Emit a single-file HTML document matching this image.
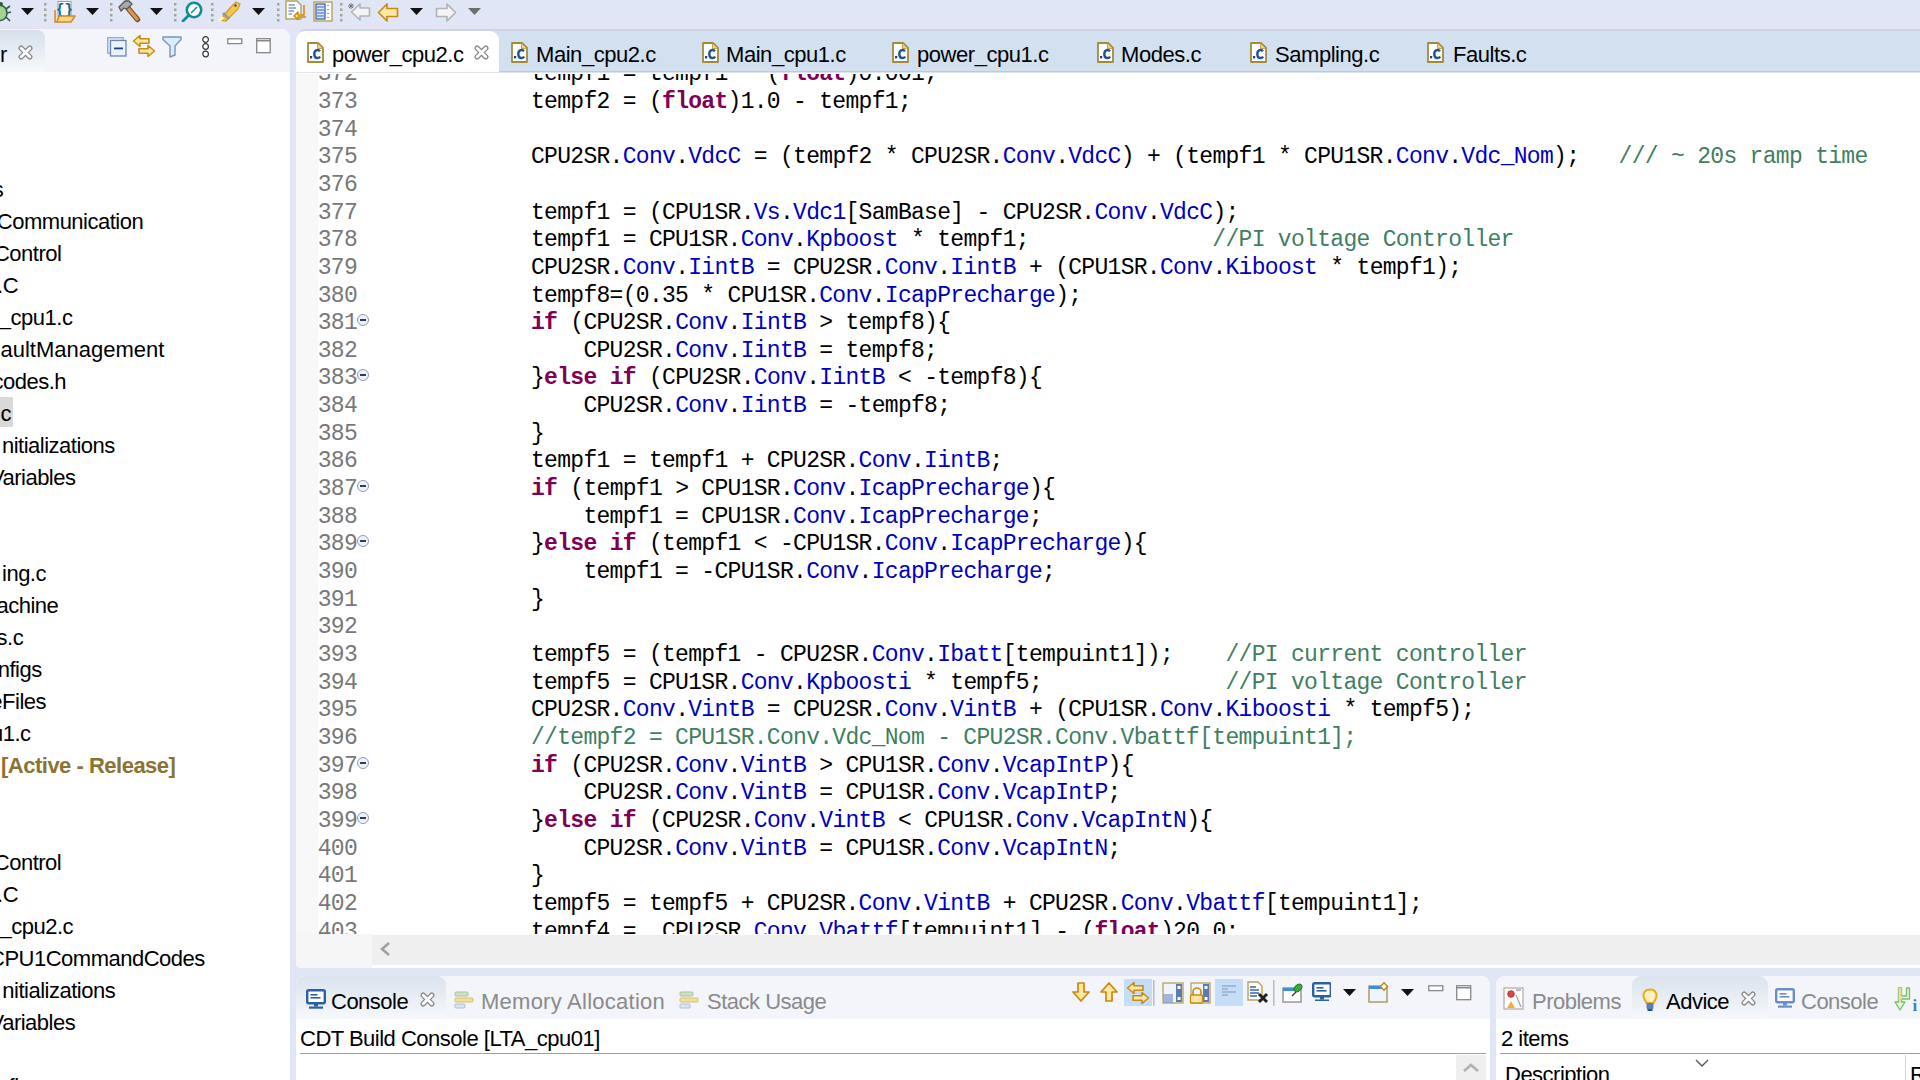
<!DOCTYPE html>
<html><head><meta charset="utf-8">
<style>
*{box-sizing:border-box}
html,body{margin:0;padding:0}
body{width:1920px;height:1080px;overflow:hidden;position:relative;background:#e0e6f5;font-family:"Liberation Sans",sans-serif;}
.abs{position:absolute}
/* left panel */
#lp{position:absolute;left:0;top:29px;width:290px;height:1051px;background:#fff;border-top-right-radius:9px;overflow:hidden}
#lph{position:absolute;left:0;top:0;width:290px;height:43px;background:#f3f5fa}
#lptab{position:absolute;left:0;top:1px;width:45px;height:42px;background:linear-gradient(#d6e0eb,#f7f9fc);border-top-right-radius:8px}
.ti{position:absolute;height:24px;font-size:22px;letter-spacing:-0.5px;white-space:pre;color:#000;line-height:24px}
.ti.act{color:#8b7331;font-weight:bold;left:2px}
/* editor */
#ed{position:absolute;left:296px;top:29px;width:1624px;height:939px;background:#fff;border-top-left-radius:9px;border-bottom-left-radius:5px;overflow:hidden}
#edtabs{position:absolute;left:0;top:0;width:1624px;height:43px;background:#d2e0f0;border-top:2px solid #c9d5e4}
#acttab{position:absolute;left:0;top:0;width:203px;height:43px;background:#fff;border-top-left-radius:9px;border-top-right-radius:9px}
.tab{position:absolute;top:11px;font-size:22px;letter-spacing:-0.45px;white-space:pre;line-height:26px;color:#000}
.cicon{position:absolute;top:13px;width:17px;height:21px}
#code{position:absolute;left:0;top:45px;width:1624px;height:860px;overflow:hidden;background:#fff}
#gut1{position:absolute;left:0;top:0;width:22px;height:100%;background:#f8f8f8}
.ln{position:absolute;left:0;width:61px;text-align:right;font-family:"Liberation Mono",monospace;font-size:23px;letter-spacing:-0.7px;line-height:28px;color:#787878;white-space:pre}
.cl{position:absolute;left:235px;font-family:"Liberation Mono",monospace;font-size:23px;letter-spacing:-0.7px;line-height:28px;color:#000;white-space:pre}
.cl b.k{font-weight:bold;color:#7f0055}
.cl i.f{font-style:normal;color:#0000c0}
.cl u.c{text-decoration:none;color:#3f7f5f}
.fold{position:absolute;left:61px;width:12px;height:12px;border-radius:50%;border:1px solid #8e9cb6;background:#eef2f8}
.fold::after{content:"";position:absolute;left:2px;top:4px;width:6px;height:2px;background:#2b3d63}
#hsb{position:absolute;left:76px;top:906px;width:1548px;height:30px;background:#efefef}
/* bottom panels */
#bp{position:absolute;left:296px;top:976px;width:1194px;height:104px;background:#fff;border-top-left-radius:9px;border-top-right-radius:9px;overflow:hidden}
#bph{position:absolute;left:0;top:0;width:100%;height:43px;background:#f3f5fa}
#bptab{position:absolute;left:0;top:0;width:150px;height:43px;background:linear-gradient(#dbe3ee,#f6f8fb);border-top-left-radius:9px;border-top-right-radius:9px}
#rp{position:absolute;left:1496px;top:976px;width:424px;height:104px;background:#fff;border-top-left-radius:9px;overflow:hidden}
#rph{position:absolute;left:0;top:0;width:100%;height:43px;background:#f3f5fa}
#rptab{position:absolute;left:136px;top:0;width:136px;height:43px;background:linear-gradient(#dbe3ee,#f6f8fb);border-top-left-radius:9px;border-top-right-radius:9px}
.ptab{position:absolute;top:12px;font-size:22px;letter-spacing:-0.5px;white-space:pre;line-height:26px}
.gray{color:#8a8a8a}
</style></head><body>

<!-- toolbar -->
<div id="tb" class="abs" style="left:0;top:0;width:1920px;height:29px"></div><div class="abs" style="left:0;top:26px;width:1920px;height:3px;background:#e5e3f3"></div>

<!-- left panel -->
<div id="lp">
  <div id="lph"><div id="lptab"></div><div class="ptab" style="left:0px;top:12.5px">r</div></div>
  <div class="abs" style="left:0;top:368.0px;width:13px;height:30px;background:#d9d9d9"></div>
<div class="ti" style="top:148.5px;right:286.7px">includes</div>
<div class="ti" style="top:180.6px;right:146.8px">IPCCommunication</div>
<div class="ti" style="top:212.6px;right:228.6px">PowerControl</div>
<div class="ti" style="top:244.6px;right:271.9px">F2837xD_Ipc.C</div>
<div class="ti" style="top:276.7px;right:217.6px">power_cpu1.c</div>
<div class="ti" style="top:308.8px;right:125.6px ;letter-spacing:0px">aultManagement</div>
<div class="ti" style="top:340.8px;right:223.9px">codes.h</div>
<div class="ti" style="top:372.8px;right:279.0px">Sampling.c</div>
<div class="ti" style="top:404.9px;right:175.2px">nitializations</div>
<div class="ti" style="top:436.9px;right:214.5px">Variables</div>
<div class="ti" style="top:533.1px;right:244.0px">ing.c</div>
<div class="ti" style="top:565.1px;right:231.7px">StateMachine</div>
<div class="ti" style="top:597.2px;right:266.8px">Modes.c</div>
<div class="ti" style="top:629.2px;right:248.3px">targetConfigs</div>
<div class="ti" style="top:661.3px;right:244.0px">SourceFiles</div>
<div class="ti" style="top:693.3px;right:259.4px">Main_cpu1.c</div>
<div class="ti" style="top:821.5px;right:228.8px">PowerControl</div>
<div class="ti" style="top:853.6px;right:271.9px">F2837xD_Ipc.C</div>
<div class="ti" style="top:885.6px;right:217.0px">power_cpu2.c</div>
<div class="ti" style="top:917.7px;right:85.2px">IPC_CPU1CommandCodes</div>
<div class="ti" style="top:949.7px;right:174.8px">nitializations</div>
<div class="ti" style="top:981.8px;right:214.8px">Variables</div>
<div class="ti" style="top:1045.9px;right:249.2px">targetConfigs</div>
<div class="ti act" style="top:725.4px;left:1px">[Active - Release]</div>
</div>

<!-- editor -->
<div id="ed">
  <div id="edtabs">
    <div class="abs" style="left:0;top:40px;width:1624px;height:1.5px;background:#bccadb"></div><div id="acttab"></div>
    <div class="tab" style="left:36px">power_cpu2.c</div>
    <div class="tab" style="left:240px">Main_cpu2.c</div>
    <div class="tab" style="left:430px">Main_cpu1.c</div>
    <div class="tab" style="left:621px">power_cpu1.c</div>
    <div class="tab" style="left:825px">Modes.c</div>
    <div class="tab" style="left:979px">Sampling.c</div>
    <div class="tab" style="left:1157px">Faults.c</div>
  </div>
  <div class="abs" style="left:0;top:43px;width:1624px;height:1px;background:#dfe4ec"></div>
  <div id="code">
    <div id="gut1"></div>
    <div class="ln" style="top:-13.78px">372</div>
<div class="cl" style="top:-13.78px">tempf1 = tempf1   (<b class="k">float</b>)0.001;</div>
<div class="ln" style="top:13.88px">373</div>
<div class="cl" style="top:13.88px">tempf2 = (<b class="k">float</b>)1.0 - tempf1;</div>
<div class="ln" style="top:41.54px">374</div>
<div class="ln" style="top:69.20px">375</div>
<div class="cl" style="top:69.20px">CPU2SR.<i class="f">Conv</i>.<i class="f">VdcC</i> = (tempf2 * CPU2SR.<i class="f">Conv</i>.<i class="f">VdcC</i>) + (tempf1 * CPU1SR.<i class="f">Conv</i>.<i class="f">Vdc_Nom</i>);   <u class="c">/// ~ 20s ramp time</u></div>
<div class="ln" style="top:96.86px">376</div>
<div class="ln" style="top:124.52px">377</div>
<div class="cl" style="top:124.52px">tempf1 = (CPU1SR.<i class="f">Vs</i>.<i class="f">Vdc1</i>[SamBase] - CPU2SR.<i class="f">Conv</i>.<i class="f">VdcC</i>);</div>
<div class="ln" style="top:152.18px">378</div>
<div class="cl" style="top:152.18px">tempf1 = CPU1SR.<i class="f">Conv</i>.<i class="f">Kpboost</i> * tempf1;              <u class="c">//PI voltage Controller</u></div>
<div class="ln" style="top:179.84px">379</div>
<div class="cl" style="top:179.84px">CPU2SR.<i class="f">Conv</i>.<i class="f">IintB</i> = CPU2SR.<i class="f">Conv</i>.<i class="f">IintB</i> + (CPU1SR.<i class="f">Conv</i>.<i class="f">Kiboost</i> * tempf1);</div>
<div class="ln" style="top:207.50px">380</div>
<div class="cl" style="top:207.50px">tempf8=(0.35 * CPU1SR.<i class="f">Conv</i>.<i class="f">IcapPrecharge</i>);</div>
<div class="ln" style="top:235.16px">381</div>
<div class="fold" style="top:239.98px"></div>
<div class="cl" style="top:235.16px"><b class="k">if</b> (CPU2SR.<i class="f">Conv</i>.<i class="f">IintB</i> &gt; tempf8){</div>
<div class="ln" style="top:262.82px">382</div>
<div class="cl" style="top:262.82px">    CPU2SR.<i class="f">Conv</i>.<i class="f">IintB</i> = tempf8;</div>
<div class="ln" style="top:290.48px">383</div>
<div class="fold" style="top:295.30px"></div>
<div class="cl" style="top:290.48px">}<b class="k">else</b> <b class="k">if</b> (CPU2SR.<i class="f">Conv</i>.<i class="f">IintB</i> &lt; -tempf8){</div>
<div class="ln" style="top:318.14px">384</div>
<div class="cl" style="top:318.14px">    CPU2SR.<i class="f">Conv</i>.<i class="f">IintB</i> = -tempf8;</div>
<div class="ln" style="top:345.80px">385</div>
<div class="cl" style="top:345.80px">}</div>
<div class="ln" style="top:373.46px">386</div>
<div class="cl" style="top:373.46px">tempf1 = tempf1 + CPU2SR.<i class="f">Conv</i>.<i class="f">IintB</i>;</div>
<div class="ln" style="top:401.12px">387</div>
<div class="fold" style="top:405.94px"></div>
<div class="cl" style="top:401.12px"><b class="k">if</b> (tempf1 &gt; CPU1SR.<i class="f">Conv</i>.<i class="f">IcapPrecharge</i>){</div>
<div class="ln" style="top:428.78px">388</div>
<div class="cl" style="top:428.78px">    tempf1 = CPU1SR.<i class="f">Conv</i>.<i class="f">IcapPrecharge</i>;</div>
<div class="ln" style="top:456.44px">389</div>
<div class="fold" style="top:461.26px"></div>
<div class="cl" style="top:456.44px">}<b class="k">else</b> <b class="k">if</b> (tempf1 &lt; -CPU1SR.<i class="f">Conv</i>.<i class="f">IcapPrecharge</i>){</div>
<div class="ln" style="top:484.10px">390</div>
<div class="cl" style="top:484.10px">    tempf1 = -CPU1SR.<i class="f">Conv</i>.<i class="f">IcapPrecharge</i>;</div>
<div class="ln" style="top:511.76px">391</div>
<div class="cl" style="top:511.76px">}</div>
<div class="ln" style="top:539.42px">392</div>
<div class="ln" style="top:567.08px">393</div>
<div class="cl" style="top:567.08px">tempf5 = (tempf1 - CPU2SR.<i class="f">Conv</i>.<i class="f">Ibatt</i>[tempuint1]);    <u class="c">//PI current controller</u></div>
<div class="ln" style="top:594.74px">394</div>
<div class="cl" style="top:594.74px">tempf5 = CPU1SR.<i class="f">Conv</i>.<i class="f">Kpboosti</i> * tempf5;              <u class="c">//PI voltage Controller</u></div>
<div class="ln" style="top:622.40px">395</div>
<div class="cl" style="top:622.40px">CPU2SR.<i class="f">Conv</i>.<i class="f">VintB</i> = CPU2SR.<i class="f">Conv</i>.<i class="f">VintB</i> + (CPU1SR.<i class="f">Conv</i>.<i class="f">Kiboosti</i> * tempf5);</div>
<div class="ln" style="top:650.06px">396</div>
<div class="cl" style="top:650.06px"><u class="c">//tempf2 = CPU1SR.Conv.Vdc_Nom - CPU2SR.Conv.Vbattf[tempuint1];</u></div>
<div class="ln" style="top:677.72px">397</div>
<div class="fold" style="top:682.54px"></div>
<div class="cl" style="top:677.72px"><b class="k">if</b> (CPU2SR.<i class="f">Conv</i>.<i class="f">VintB</i> &gt; CPU1SR.<i class="f">Conv</i>.<i class="f">VcapIntP</i>){</div>
<div class="ln" style="top:705.38px">398</div>
<div class="cl" style="top:705.38px">    CPU2SR.<i class="f">Conv</i>.<i class="f">VintB</i> = CPU1SR.<i class="f">Conv</i>.<i class="f">VcapIntP</i>;</div>
<div class="ln" style="top:733.04px">399</div>
<div class="fold" style="top:737.86px"></div>
<div class="cl" style="top:733.04px">}<b class="k">else</b> <b class="k">if</b> (CPU2SR.<i class="f">Conv</i>.<i class="f">VintB</i> &lt; CPU1SR.<i class="f">Conv</i>.<i class="f">VcapIntN</i>){</div>
<div class="ln" style="top:760.70px">400</div>
<div class="cl" style="top:760.70px">    CPU2SR.<i class="f">Conv</i>.<i class="f">VintB</i> = CPU1SR.<i class="f">Conv</i>.<i class="f">VcapIntN</i>;</div>
<div class="ln" style="top:788.36px">401</div>
<div class="cl" style="top:788.36px">}</div>
<div class="ln" style="top:816.02px">402</div>
<div class="cl" style="top:816.02px">tempf5 = tempf5 + CPU2SR.<i class="f">Conv</i>.<i class="f">VintB</i> + CPU2SR.<i class="f">Conv</i>.<i class="f">Vbattf</i>[tempuint1];</div>
<div class="ln" style="top:843.68px">403</div>
<div class="cl" style="top:843.68px">tempf4 =  CPU2SR.<i class="f">Conv</i>.<i class="f">Vbattf</i>[tempuint1] - (<b class="k">float</b>)20.0;</div>
  </div>
  <div class="abs" style="left:0;top:905px;width:76px;height:34px;background:#f6f6f6"></div><div id="hsb"></div>
</div>

<!-- bottom console panel -->
<div id="bp">
  <div id="bph"><div id="bptab"></div></div>
  <div class="ptab" style="left:35px;top:12.5px">Console</div>
  <div class="ptab gray" style="left:185px;top:12.5px;letter-spacing:0.25px">Memory Allocation</div>
  <div class="ptab gray" style="left:411px;top:12.5px">Stack Usage</div>
  <div class="ptab" style="left:4px;top:50px">CDT Build Console [LTA_cpu01]</div>
  <div class="abs" style="left:4px;top:77px;width:1186px;height:1px;background:#a0a0a0"></div>
</div>

<!-- right panel -->
<div id="rp">
  <div id="rph"><div id="rptab"></div></div>
  <div class="ptab gray" style="left:36px;top:12.5px">Problems</div>
  <div class="ptab" style="left:170px;top:12.5px">Advice</div>
  <div class="ptab gray" style="left:305px;top:12.5px">Console</div>
  <div class="ptab" style="left:5px;top:50px">2 items</div>
  <div class="abs" style="left:4px;top:77px;width:420px;height:1px;background:#a0a0a0"></div>
  <div class="ptab" style="left:9px;top:86px">Description</div><div class="ptab" style="left:414px;top:86px">R</div>
</div>
<div id="icons">
<svg class="abs" style="left:0px;top:1px;" width="12" height="24" viewBox="0 0 12 24"><ellipse cx="0.5" cy="12" rx="6.5" ry="7.5" fill="#a5d38e" stroke="#2f5d4a" stroke-width="1.5"/><path d="M6,8 L10,5 M7,12 L11,11 M6,16 L10,20" stroke="#2f5d4a" stroke-width="1.6"/><circle cx="1" cy="3" r="2" fill="#2f5d4a"/></svg>
<svg class="abs" style="left:21px;top:8px;" width="13" height="7" viewBox="0 0 13 7"><polygon points="0,0 13,0 6.5,7" fill="#111"/></svg>
<svg class="abs" style="left:44px;top:2px;" width="3" height="21" viewBox="0 0 3 21"><rect x="0" y="1" width="2.5" height="2.5" fill="#a3a590"/><rect x="0" y="6.5" width="2.5" height="2.5" fill="#a3a590"/><rect x="0" y="12" width="2.5" height="2.5" fill="#a3a590"/><rect x="0" y="17" width="2.5" height="2.5" fill="#a3a590"/></svg>
<svg class="abs" style="left:54px;top:1px;" width="22" height="23" viewBox="0 0 22 23"><rect x="4" y="0.5" width="13" height="15" fill="#fff" stroke="#9a9a9a" stroke-width="1"/><text x="10.5" y="13" font-family="Liberation Mono" font-size="14" font-weight="bold" fill="#0d6a86" text-anchor="middle">{}</text><path d="M1,9 V21 H17 L21,15 H5 L3,21" fill="#f7d58a" stroke="#d08a1f" stroke-width="1.5" stroke-linejoin="round"/></svg>
<svg class="abs" style="left:86px;top:8px;" width="13" height="7" viewBox="0 0 13 7"><polygon points="0,0 13,0 6.5,7" fill="#111"/></svg>
<svg class="abs" style="left:110px;top:2px;" width="3" height="21" viewBox="0 0 3 21"><rect x="0" y="1" width="2.5" height="2.5" fill="#a3a590"/><rect x="0" y="6.5" width="2.5" height="2.5" fill="#a3a590"/><rect x="0" y="12" width="2.5" height="2.5" fill="#a3a590"/><rect x="0" y="17" width="2.5" height="2.5" fill="#a3a590"/></svg>
<svg class="abs" style="left:118px;top:0px;" width="23" height="23" viewBox="0 0 23 23"><path d="M9,7 L19.5,19.5" stroke="#8a4f1c" stroke-width="5.5" stroke-linecap="round"/><path d="M9,7 L19,19" stroke="#d49a55" stroke-width="3.2" stroke-linecap="round"/><path d="M1,7 L7,1 L11,1 L14,4 L9,9 L6,8 L3,11 Z" fill="#a9a9a9" stroke="#555" stroke-width="1.3" stroke-linejoin="round"/></svg>
<svg class="abs" style="left:150px;top:8px;" width="13" height="7" viewBox="0 0 13 7"><polygon points="0,0 13,0 6.5,7" fill="#111"/></svg>
<svg class="abs" style="left:174px;top:2px;" width="3" height="21" viewBox="0 0 3 21"><rect x="0" y="1" width="2.5" height="2.5" fill="#a3a590"/><rect x="0" y="6.5" width="2.5" height="2.5" fill="#a3a590"/><rect x="0" y="12" width="2.5" height="2.5" fill="#a3a590"/><rect x="0" y="17" width="2.5" height="2.5" fill="#a3a590"/></svg>
<svg class="abs" style="left:181px;top:1px;" width="23" height="21" viewBox="0 0 23 21"><circle cx="13" cy="9" r="7.2" fill="#fff" stroke="#138a98" stroke-width="2.6"/><path d="M8,14 L2,20" stroke="#138a98" stroke-width="2.8" stroke-linecap="round"/><path d="M10,12 L16,6" stroke="#138a98" stroke-width="1.4"/></svg>
<svg class="abs" style="left:211px;top:2px;" width="3" height="21" viewBox="0 0 3 21"><rect x="0" y="1" width="2.5" height="2.5" fill="#a3a590"/><rect x="0" y="6.5" width="2.5" height="2.5" fill="#a3a590"/><rect x="0" y="12" width="2.5" height="2.5" fill="#a3a590"/><rect x="0" y="17" width="2.5" height="2.5" fill="#a3a590"/></svg>
<svg class="abs" style="left:218px;top:0px;" width="24" height="23" viewBox="0 0 24 23"><path d="M2,20 L12,8 L18,2 L22,4 L20,9 L8,21 Z" fill="#f6c64a" stroke="#d19a24" stroke-width="1.2"/><path d="M5,13 L11,19" stroke="#9a9a9a" stroke-width="3"/><circle cx="17.5" cy="5.5" r="1.2" fill="#2a4f9a"/><path d="M1,21 L5,17" stroke="#fff8c0" stroke-width="3"/></svg>
<svg class="abs" style="left:252px;top:8px;" width="13" height="7" viewBox="0 0 13 7"><polygon points="0,0 13,0 6.5,7" fill="#111"/></svg>
<svg class="abs" style="left:277px;top:2px;" width="3" height="21" viewBox="0 0 3 21"><rect x="0" y="1" width="2.5" height="2.5" fill="#a3a590"/><rect x="0" y="6.5" width="2.5" height="2.5" fill="#a3a590"/><rect x="0" y="12" width="2.5" height="2.5" fill="#a3a590"/><rect x="0" y="17" width="2.5" height="2.5" fill="#a3a590"/></svg>
<svg class="abs" style="left:285px;top:0px;" width="22" height="21" viewBox="0 0 22 21"><path d="M1,1 H12 L16,5 V19 H1 Z" fill="#fff" stroke="#b7a25c" stroke-width="1.4"/><path d="M3.5,5 H10 M3.5,8 H11 M3.5,11 H9 M3.5,14 H7" stroke="#3a63b8" stroke-width="1.2"/><path d="M19,5 V15 H13 V12 L9,16 L13,19.5 V17 H21" fill="#fde9a6" stroke="#c98a16" stroke-width="1.5" stroke-linejoin="round"/></svg>
<svg class="abs" style="left:313px;top:1px;" width="21" height="22" viewBox="0 0 21 22"><rect x="1" y="1" width="18" height="19" fill="#fff" stroke="#b7a25c" stroke-width="1.4"/><rect x="3" y="3" width="9" height="15" fill="#dce8f8" stroke="#3a63b8" stroke-width="1.3"/><path d="M4,6 H11 M4,9 H11 M4,12 H11 M4,15 H11" stroke="#3a63b8" stroke-width="1.2"/><path d="M15,4 V5 M15,8 V9 M15,12 V13 M15,16 V17" stroke="#3a63b8" stroke-width="1.2"/></svg>
<svg class="abs" style="left:340px;top:2px;" width="3" height="21" viewBox="0 0 3 21"><rect x="0" y="1" width="2.5" height="2.5" fill="#a3a590"/><rect x="0" y="6.5" width="2.5" height="2.5" fill="#a3a590"/><rect x="0" y="12" width="2.5" height="2.5" fill="#a3a590"/><rect x="0" y="17" width="2.5" height="2.5" fill="#a3a590"/></svg>
<svg class="abs" style="left:347px;top:1px;" width="24" height="21" viewBox="0 0 24 21"><path d="M2,3 L6,7 M6,3 L2,7 M4,2 V8 M1,5 H7" stroke="#777" stroke-width="1"/><path d="M4.5,11 L13,3 V7 H22.5 V15 H13 V19 Z" fill="#f4f4f4" stroke="#b3b3b3" stroke-width="1.6" stroke-linejoin="round"/></svg>
<svg class="abs" style="left:377px;top:2px;" width="22" height="21" viewBox="0 0 22 21"><path d="M1.5,10.5 L10,2 V6.5 H20.5 V14.5 H10 V19 Z" fill="#fde9a6" stroke="#c98a16" stroke-width="1.7" stroke-linejoin="round"/></svg>
<svg class="abs" style="left:410px;top:8px;" width="13" height="7" viewBox="0 0 13 7"><polygon points="0,0 13,0 6.5,7" fill="#111"/></svg>
<svg class="abs" style="left:435px;top:2px;" width="22" height="21" viewBox="0 0 22 21"><path d="M1.5,10.5 L10,2 V6.5 H20.5 V14.5 H10 V19 Z" fill="#f4f4f4" stroke="#b3b3b3" stroke-width="1.7" stroke-linejoin="round" transform="translate(22 0) scale(-1 1)"/></svg>
<svg class="abs" style="left:468px;top:8px;" width="13" height="7" viewBox="0 0 13 7"><polygon points="0,0 13,0 6.5,7" fill="#6e6e6e"/></svg>
<svg class="abs" style="left:18px;top:45px;" width="15" height="15" viewBox="0 0 15 15"><path d="M3.2,3.2 L11.8,11.8 M11.8,3.2 L3.2,11.8" stroke="#8a8a8a" stroke-width="5.4" stroke-linecap="round"/><path d="M3.2,3.2 L11.8,11.8 M11.8,3.2 L3.2,11.8" stroke="#fbfbfb" stroke-width="2.8" stroke-linecap="round"/></svg>
<svg class="abs" style="left:107px;top:37px;" width="20" height="20" viewBox="0 0 20 20"><rect x="0.7" y="0.7" width="15.5" height="15.5" fill="#dcecfb" stroke="#8fa4c6" stroke-width="1.2"/><rect x="3.5" y="3.5" width="15.5" height="15.5" fill="#e9f3fd" stroke="#6f84ad" stroke-width="1.3"/><rect x="7" y="10.5" width="9" height="1.8" fill="#1c3f94"/></svg>
<svg class="abs" style="left:132px;top:34px;" width="24" height="24" viewBox="0 0 24 24"><path d="M1.5,7 L8,1.5 V4.8 H17 V9.2 H8 V12.5 Z" fill="#fde9a6" stroke="#c98a16" stroke-width="1.6" stroke-linejoin="round"/><path d="M22.5,17 L16,11.5 V14.8 H7 V19.2 H16 V22.5 Z" fill="#fde9a6" stroke="#c98a16" stroke-width="1.6" stroke-linejoin="round"/></svg>
<svg class="abs" style="left:162px;top:36px;" width="20" height="22" viewBox="0 0 20 22"><path d="M1,1 H19 V3.5 L13,10 V19 L8,21 V10 L1,3.5 Z" fill="#d7eefc" stroke="#8092b8" stroke-width="1.4" stroke-linejoin="round"/></svg>
<svg class="abs" style="left:202px;top:36px;" width="9" height="22" viewBox="0 0 9 22"><circle cx="3.6" cy="3.5" r="2.8" fill="#fff" stroke="#333" stroke-width="1.2"/><circle cx="3.6" cy="10.5" r="2.8" fill="#fff" stroke="#333" stroke-width="1.2"/><circle cx="3.6" cy="18" r="2.8" fill="#fff" stroke="#333" stroke-width="1.2"/></svg>
<svg class="abs" style="left:227px;top:38px;" width="16" height="7" viewBox="0 0 16 7"><rect x="0.8" y="0.8" width="14" height="4.8" fill="#fff" stroke="#888" stroke-width="1.3"/></svg>
<svg class="abs" style="left:256px;top:38px;" width="15" height="16" viewBox="0 0 15 16"><rect x="0.7" y="0.7" width="13.5" height="14" fill="#fff" stroke="#888" stroke-width="1.3"/><rect x="0.7" y="2" width="13.5" height="1.5" fill="#888"/></svg>
<svg class="abs" style="left:307px;top:42px;" width="17" height="21" viewBox="0 0 17 21"><path d="M1,1 H11 L16,6 V20 H1 Z" fill="#fff" stroke="#a38a3a" stroke-width="1.8" stroke-linejoin="round"/><path d="M10.5,1.5 V6.5 H15.5" fill="#f3d27a" stroke="#c9a24a" stroke-width="1"/><rect x="3" y="14" width="2.2" height="2.4" fill="#1f3f8a"/><path d="M13,9.3 C12,8 10.5,7.9 9.6,8.2 C7.5,9 7.3,11 7.3,12.2 C7.3,14 8.2,16 10.4,16 C11.6,16 12.6,15.4 13.2,14.6" fill="none" stroke="#1f5296" stroke-width="2.4"/></svg>
<svg class="abs" style="left:511px;top:42px;" width="17" height="21" viewBox="0 0 17 21"><path d="M1,1 H11 L16,6 V20 H1 Z" fill="#fff" stroke="#a38a3a" stroke-width="1.8" stroke-linejoin="round"/><path d="M10.5,1.5 V6.5 H15.5" fill="#f3d27a" stroke="#c9a24a" stroke-width="1"/><rect x="3" y="14" width="2.2" height="2.4" fill="#1f3f8a"/><path d="M13,9.3 C12,8 10.5,7.9 9.6,8.2 C7.5,9 7.3,11 7.3,12.2 C7.3,14 8.2,16 10.4,16 C11.6,16 12.6,15.4 13.2,14.6" fill="none" stroke="#1f5296" stroke-width="2.4"/></svg>
<svg class="abs" style="left:702px;top:42px;" width="17" height="21" viewBox="0 0 17 21"><path d="M1,1 H11 L16,6 V20 H1 Z" fill="#fff" stroke="#a38a3a" stroke-width="1.8" stroke-linejoin="round"/><path d="M10.5,1.5 V6.5 H15.5" fill="#f3d27a" stroke="#c9a24a" stroke-width="1"/><rect x="3" y="14" width="2.2" height="2.4" fill="#1f3f8a"/><path d="M13,9.3 C12,8 10.5,7.9 9.6,8.2 C7.5,9 7.3,11 7.3,12.2 C7.3,14 8.2,16 10.4,16 C11.6,16 12.6,15.4 13.2,14.6" fill="none" stroke="#1f5296" stroke-width="2.4"/></svg>
<svg class="abs" style="left:892px;top:42px;" width="17" height="21" viewBox="0 0 17 21"><path d="M1,1 H11 L16,6 V20 H1 Z" fill="#fff" stroke="#a38a3a" stroke-width="1.8" stroke-linejoin="round"/><path d="M10.5,1.5 V6.5 H15.5" fill="#f3d27a" stroke="#c9a24a" stroke-width="1"/><rect x="3" y="14" width="2.2" height="2.4" fill="#1f3f8a"/><path d="M13,9.3 C12,8 10.5,7.9 9.6,8.2 C7.5,9 7.3,11 7.3,12.2 C7.3,14 8.2,16 10.4,16 C11.6,16 12.6,15.4 13.2,14.6" fill="none" stroke="#1f5296" stroke-width="2.4"/></svg>
<svg class="abs" style="left:1097px;top:42px;" width="17" height="21" viewBox="0 0 17 21"><path d="M1,1 H11 L16,6 V20 H1 Z" fill="#fff" stroke="#a38a3a" stroke-width="1.8" stroke-linejoin="round"/><path d="M10.5,1.5 V6.5 H15.5" fill="#f3d27a" stroke="#c9a24a" stroke-width="1"/><rect x="3" y="14" width="2.2" height="2.4" fill="#1f3f8a"/><path d="M13,9.3 C12,8 10.5,7.9 9.6,8.2 C7.5,9 7.3,11 7.3,12.2 C7.3,14 8.2,16 10.4,16 C11.6,16 12.6,15.4 13.2,14.6" fill="none" stroke="#1f5296" stroke-width="2.4"/></svg>
<svg class="abs" style="left:1250px;top:42px;" width="17" height="21" viewBox="0 0 17 21"><path d="M1,1 H11 L16,6 V20 H1 Z" fill="#fff" stroke="#a38a3a" stroke-width="1.8" stroke-linejoin="round"/><path d="M10.5,1.5 V6.5 H15.5" fill="#f3d27a" stroke="#c9a24a" stroke-width="1"/><rect x="3" y="14" width="2.2" height="2.4" fill="#1f3f8a"/><path d="M13,9.3 C12,8 10.5,7.9 9.6,8.2 C7.5,9 7.3,11 7.3,12.2 C7.3,14 8.2,16 10.4,16 C11.6,16 12.6,15.4 13.2,14.6" fill="none" stroke="#1f5296" stroke-width="2.4"/></svg>
<svg class="abs" style="left:1427px;top:42px;" width="17" height="21" viewBox="0 0 17 21"><path d="M1,1 H11 L16,6 V20 H1 Z" fill="#fff" stroke="#a38a3a" stroke-width="1.8" stroke-linejoin="round"/><path d="M10.5,1.5 V6.5 H15.5" fill="#f3d27a" stroke="#c9a24a" stroke-width="1"/><rect x="3" y="14" width="2.2" height="2.4" fill="#1f3f8a"/><path d="M13,9.3 C12,8 10.5,7.9 9.6,8.2 C7.5,9 7.3,11 7.3,12.2 C7.3,14 8.2,16 10.4,16 C11.6,16 12.6,15.4 13.2,14.6" fill="none" stroke="#1f5296" stroke-width="2.4"/></svg>
<svg class="abs" style="left:474px;top:45px;" width="15" height="15" viewBox="0 0 15 15"><path d="M3.2,3.2 L11.8,11.8 M11.8,3.2 L3.2,11.8" stroke="#8a8a8a" stroke-width="5.4" stroke-linecap="round"/><path d="M3.2,3.2 L11.8,11.8 M11.8,3.2 L3.2,11.8" stroke="#fbfbfb" stroke-width="2.8" stroke-linecap="round"/></svg>
<svg class="abs" style="left:378px;top:941px;" width="14" height="16" viewBox="0 0 14 16"><path d="M11,2 L4,8 L11,14" fill="none" stroke="#a0a0a0" stroke-width="2.6"/></svg>
<svg class="abs" style="left:306px;top:989px;" width="20" height="20" viewBox="0 0 20 20"><rect x="1.2" y="1.2" width="17.6" height="13" rx="1.5" fill="#fff" stroke="#2b5fa6" stroke-width="2.4"/><rect x="4.5" y="5" width="7" height="1.6" fill="#2b5fa6"/><rect x="4.5" y="8" width="10" height="1.6" fill="#2b5fa6"/><rect x="8" y="14.5" width="4" height="3" fill="#2b5fa6"/><rect x="3" y="17.5" width="14" height="2.2" fill="#2b5fa6"/></svg>
<svg class="abs" style="left:420px;top:991.5px;" width="15" height="15" viewBox="0 0 15 15"><path d="M3.2,3.2 L11.8,11.8 M11.8,3.2 L3.2,11.8" stroke="#8a8a8a" stroke-width="5.4" stroke-linecap="round"/><path d="M3.2,3.2 L11.8,11.8 M11.8,3.2 L3.2,11.8" stroke="#fbfbfb" stroke-width="2.8" stroke-linecap="round"/></svg>
<svg class="abs" style="left:454px;top:991px;" width="20" height="18" viewBox="0 0 20 18"><rect x="1" y="1" width="13" height="4" rx="1" fill="#cfe0c0" stroke="#a8c59a" stroke-width="1"/><rect x="1" y="7" width="18" height="4" rx="1" fill="#f2dfa0" stroke="#d9bf6c" stroke-width="1"/><rect x="1" y="13" width="10" height="4" rx="1" fill="#d9e4f5" stroke="#a9bfe0" stroke-width="1"/></svg>
<svg class="abs" style="left:679px;top:991px;" width="20" height="18" viewBox="0 0 20 18"><rect x="1" y="1" width="13" height="4" rx="1" fill="#cfe0c0" stroke="#a8c59a" stroke-width="1"/><rect x="1" y="7" width="18" height="4" rx="1" fill="#f2dfa0" stroke="#d9bf6c" stroke-width="1"/><rect x="1" y="13" width="10" height="4" rx="1" fill="#d9e4f5" stroke="#a9bfe0" stroke-width="1"/></svg>
<svg class="abs" style="left:1072px;top:982px;" width="18" height="21" viewBox="0 0 18 21"><path d="M6,1 H12 V10 H17 L9,19 L1,10 H6 Z" fill="#fde8a0" stroke="#c8890f" stroke-width="1.7" stroke-linejoin="round"/></svg>
<svg class="abs" style="left:1100px;top:982px;" width="18" height="21" viewBox="0 0 18 21"><path d="M6,1 H12 V10 H17 L9,19 L1,10 H6 Z" fill="#fde8a0" stroke="#c8890f" stroke-width="1.7" stroke-linejoin="round" transform="rotate(180 9 10)"/></svg>
<svg class="abs" style="left:1124px;top:979px;" width="28" height="27" viewBox="0 0 28 27"><rect width="28" height="27" fill="#c5ddf6"/></svg>
<svg class="abs" style="left:1126px;top:981px;" width="24" height="24" viewBox="0 0 24 24"><path d="M1.5,7 L8,1.5 V4.8 H17 V9.2 H8 V12.5 Z" fill="#fde9a6" stroke="#c98a16" stroke-width="1.6" stroke-linejoin="round"/><path d="M22.5,17 L16,11.5 V14.8 H7 V19.2 H16 V22.5 Z" fill="#fde9a6" stroke="#c98a16" stroke-width="1.6" stroke-linejoin="round"/></svg>
<svg class="abs" style="left:1153px;top:980px;" width="2" height="26" viewBox="0 0 2 26"><rect width="1.5" height="26" fill="#b9bcc6"/></svg>
<svg class="abs" style="left:1162px;top:982px;" width="22" height="22" viewBox="0 0 22 22"><rect x="1" y="1" width="20" height="20" fill="#eef4fb" stroke="#b7a25c" stroke-width="1.3"/><rect x="14" y="2" width="6" height="18" fill="#5a7ab0"/><rect x="15.5" y="4" width="3" height="3" fill="#fff"/><rect x="15.5" y="15" width="3" height="3" fill="#fff"/><rect x="1" y="12" width="10" height="9" fill="#8ea5cf" opacity="0.8"/></svg>
<svg class="abs" style="left:1189px;top:982px;" width="23" height="22" viewBox="0 0 23 22"><rect x="2" y="1" width="19" height="20" fill="#eef4fb" stroke="#b7a25c" stroke-width="1.3"/><rect x="14" y="2" width="6" height="18" fill="#5a7ab0"/><rect x="15.5" y="4" width="3" height="3" fill="#fff"/><rect x="15.5" y="15" width="3" height="3" fill="#fff"/><path d="M4,14 V10 A4,4 0 0 1 12,10 V14" fill="none" stroke="#c98a16" stroke-width="1.6"/><rect x="1.5" y="13" width="12" height="8" rx="1" fill="#fde7a0" stroke="#c98a16" stroke-width="1.3"/></svg>
<svg class="abs" style="left:1215px;top:979px;" width="28" height="27" viewBox="0 0 28 27"><rect width="28" height="27" fill="#c5ddf6"/><path d="M7,7 H21 M7,10 H13 M7,13 H21 M7,16 H13" stroke="#7d95c0" stroke-width="1.2"/></svg>
<svg class="abs" style="left:1247px;top:981px;" width="22" height="23" viewBox="0 0 22 23"><path d="M1,1 H11 L15,5 V19 H1 Z" fill="#fff" stroke="#b7a25c" stroke-width="1.4"/><path d="M3,6 H9 M3,9 H12 M3,12 H12 M3,15 H10" stroke="#3a63b8" stroke-width="1.4"/><path d="M12,13 L20,21 M20,13 L12,21" stroke="#222" stroke-width="3"/></svg>
<svg class="abs" style="left:1273px;top:980px;" width="2" height="26" viewBox="0 0 2 26"><rect width="1.5" height="26" fill="#b9bcc6"/></svg>
<svg class="abs" style="left:1282px;top:983px;" width="21" height="20" viewBox="0 0 21 20"><rect x="1" y="5" width="18" height="14" fill="#fff" stroke="#888" stroke-width="1.3"/><rect x="1" y="5" width="12" height="3" fill="#3d8de0"/><path d="M10,13 L14,9" stroke="#333" stroke-width="1.3"/><ellipse cx="16" cy="5" rx="4.5" ry="3" transform="rotate(-45 16 5)" fill="#3bab3b" stroke="#1f7a1f" stroke-width="1"/></svg>
<svg class="abs" style="left:1312px;top:982px;" width="19" height="19" viewBox="0 0 19 19"><rect x="1.2" y="1.2" width="17.6" height="13" rx="1.5" fill="#fff" stroke="#2b5fa6" stroke-width="2.4"/><rect x="4.5" y="5" width="7" height="1.6" fill="#2b5fa6"/><rect x="4.5" y="8" width="10" height="1.6" fill="#2b5fa6"/><rect x="8" y="14.5" width="4" height="3" fill="#2b5fa6"/><rect x="3" y="17.5" width="14" height="2.2" fill="#2b5fa6"/></svg>
<svg class="abs" style="left:1343px;top:989px;" width="13" height="7" viewBox="0 0 13 7"><polygon points="0,0 13,0 6.5,7" fill="#111"/></svg>
<svg class="abs" style="left:1368px;top:982px;" width="22" height="22" viewBox="0 0 22 22"><rect x="1" y="4" width="18" height="16" fill="#eef6fc" stroke="#a89458" stroke-width="1.4"/><rect x="1" y="4" width="13" height="3" fill="#3d8de0"/><path d="M16,0.8 L19.5,4.5 L16,8.2 L12.5,4.5 Z" fill="#fff" stroke="#c28a1a" stroke-width="1.5"/></svg>
<svg class="abs" style="left:1401px;top:989px;" width="13" height="7" viewBox="0 0 13 7"><polygon points="0,0 13,0 6.5,7" fill="#111"/></svg>
<svg class="abs" style="left:1428px;top:985px;" width="16" height="7" viewBox="0 0 16 7"><rect x="0.8" y="0.8" width="14" height="4.8" fill="#fff" stroke="#888" stroke-width="1.3"/></svg>
<svg class="abs" style="left:1456px;top:985px;" width="16" height="16" viewBox="0 0 16 16"><rect x="0.7" y="0.7" width="14" height="14" fill="#fff" stroke="#888" stroke-width="1.3"/><rect x="0.7" y="2" width="14" height="1.5" fill="#888"/></svg>
<svg class="abs" style="left:1456px;top:1055px;" width="30" height="25" viewBox="0 0 30 25"><rect width="30" height="25" fill="#efefef"/><path d="M8,16 L15,10 L22,16" fill="none" stroke="#b0b0b0" stroke-width="2.6"/></svg>
<svg class="abs" style="left:1503px;top:987px;" width="22" height="23" viewBox="0 0 22 23"><rect x="1" y="1" width="19" height="21" fill="#fff" stroke="#b9b0a0" stroke-width="1.3"/><circle cx="8" cy="7" r="3.3" fill="#e04848" stroke="#b02020" stroke-width="0.8"/><path d="M4,21 L8,14 L12,21 Z" fill="#f0b040"/><path d="M13,3 L18,3 M13,8 L18,20" stroke="#9aa5c0" stroke-width="1.3"/></svg>
<svg class="abs" style="left:1642px;top:988px;" width="16" height="24" viewBox="0 0 16 24"><path d="M8,1.5 C3,1.5 1.5,5 1.5,8 C1.5,11 4,13 4.5,15 H11.5 C12,13 14.5,11 14.5,8 C14.5,5 13,1.5 8,1.5 Z" fill="#fdf1c0" stroke="#e2ac1c" stroke-width="2"/><rect x="4.5" y="15" width="7" height="6" rx="1" fill="#5b7fb4"/><rect x="5.5" y="21" width="5" height="2" fill="#2b4f84"/></svg>
<svg class="abs" style="left:1740.5px;top:991px;" width="15" height="15" viewBox="0 0 15 15"><path d="M3.2,3.2 L11.8,11.8 M11.8,3.2 L3.2,11.8" stroke="#8a8a8a" stroke-width="5.4" stroke-linecap="round"/><path d="M3.2,3.2 L11.8,11.8 M11.8,3.2 L3.2,11.8" stroke="#fbfbfb" stroke-width="2.8" stroke-linecap="round"/></svg>
<svg class="abs" style="left:1775px;top:988px;" width="20" height="20" viewBox="0 0 20 20"><rect x="1.2" y="1.2" width="17.6" height="13" rx="1.5" fill="#fff" stroke="#6a8fc8" stroke-width="2.4"/><rect x="4.5" y="5" width="7" height="1.6" fill="#6a8fc8"/><rect x="4.5" y="8" width="10" height="1.6" fill="#6a8fc8"/><rect x="8" y="14.5" width="4" height="3" fill="#6a8fc8"/><rect x="3" y="17.5" width="14" height="2.2" fill="#6a8fc8"/></svg>
<svg class="abs" style="left:1893px;top:986px;" width="27" height="27" viewBox="0 0 27 27"><path d="M5.5,2 V16 H2 L7,24 L12,16 H8.5 V13 H16.5 V2 H13.5 V10 H8.5 V2 Z" fill="#e6f4dc" stroke="#7cc06a" stroke-width="1.4" stroke-linejoin="round"/><rect x="5.6" y="2.2" width="2.8" height="12" fill="#f2dc9a"/><text x="19.5" y="25" font-family="Liberation Serif" font-weight="bold" font-size="17" fill="#3f7fc4">i</text></svg>
<svg class="abs" style="left:1694px;top:1058px;" width="16" height="10" viewBox="0 0 16 10"><path d="M2,2 L8,8 L14,2" fill="none" stroke="#555" stroke-width="1.4"/></svg>
<svg class="abs" style="left:1905px;top:1055px;" width="2" height="25" viewBox="0 0 2 25"><rect width="1" height="25" fill="#d5d5d5"/></svg>
</div>
</body></html>
